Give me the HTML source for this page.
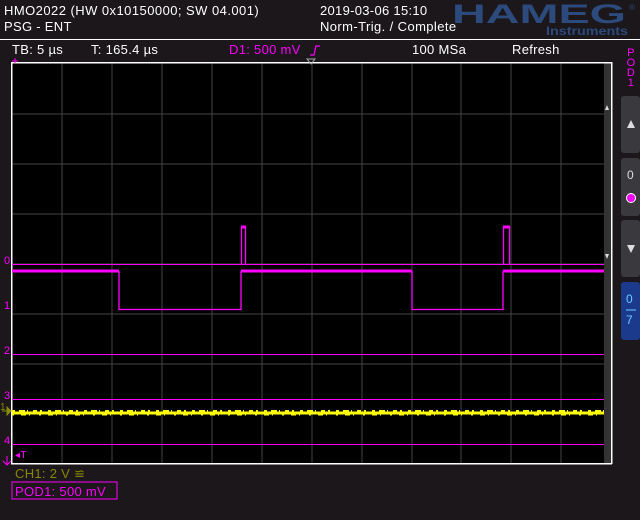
<!DOCTYPE html>
<html><head><meta charset="utf-8"><style>
html,body{margin:0;padding:0;background:#1b171a;width:640px;height:520px;overflow:hidden;font-family:"Liberation Sans",sans-serif}
.t{position:absolute;color:#fff;font-size:13px;white-space:nowrap;letter-spacing:0.3px}
</style></head><body>
<div class="t" style="left:4px;top:3px;letter-spacing:0.45px">HMO2022 (HW 0x10150000; SW 04.001)</div>
<div class="t" style="left:4px;top:19px">PSG - ENT</div>
<div class="t" style="left:320px;top:3px">2019-03-06 15:10</div>
<div class="t" style="left:320px;top:19px;letter-spacing:0.4px">Norm-Trig. / Complete</div>
<div class="t" style="left:12px;top:42px">TB: 5 µs</div>
<div class="t" style="left:91px;top:42px">T: 165.4 µs</div>
<div class="t" style="left:229px;top:42px;color:#f0f">D1: 500 mV</div>
<div class="t" style="left:412px;top:42px">100 MSa</div>
<div class="t" style="left:512px;top:42px">Refresh</div>
<div class="t" style="left:626px;top:48px;color:#f0f;font-size:11px;line-height:10px;text-align:center;width:10px">P<br>O<br>D<br>1</div>
<svg style="position:absolute;left:0;top:0" width="640" height="520">
<text x="452" y="23" font-family="Liberation Sans" font-weight="bold" font-size="27" fill="#2c4a7c" textLength="174" lengthAdjust="spacingAndGlyphs">HAMEG</text>
<text x="629" y="10" font-family="Liberation Sans" font-size="8" fill="#2c4a7c">®</text>
<text x="546" y="35" font-family="Liberation Sans" font-weight="bold" font-size="12" fill="#2c4a7c" textLength="82" lengthAdjust="spacingAndGlyphs">Instruments</text>
<rect x="0" y="39" width="640" height="1" fill="#fff"/>
<path d="M310 55L314 55L316 46L320 46" stroke="#f0f" fill="none" stroke-width="1.2"/>
<rect x="12" y="63" width="599" height="401" fill="#000"/>
<g stroke="#444" stroke-width="1">
<line x1="62" y1="63" x2="62" y2="463"/><line x1="112" y1="63" x2="112" y2="463"/><line x1="162" y1="63" x2="162" y2="463"/><line x1="212" y1="63" x2="212" y2="463"/><line x1="262" y1="63" x2="262" y2="463"/><line x1="312" y1="63" x2="312" y2="463"/><line x1="362" y1="63" x2="362" y2="463"/><line x1="412" y1="63" x2="412" y2="463"/><line x1="461" y1="63" x2="461" y2="463"/><line x1="511" y1="63" x2="511" y2="463"/><line x1="561" y1="63" x2="561" y2="463"/>
<line x1="12" y1="114" x2="604" y2="114"/><line x1="12" y1="164" x2="604" y2="164"/><line x1="12" y1="214" x2="604" y2="214"/><line x1="12" y1="264" x2="604" y2="264"/><line x1="12" y1="314" x2="604" y2="314"/><line x1="12" y1="364" x2="604" y2="364"/><line x1="12" y1="414" x2="604" y2="414"/>
</g>
<rect x="604" y="63" width="7" height="400" fill="#333"/>
<rect x="611" y="62" width="1.5" height="402" fill="#fff"/>
<rect x="11" y="62" width="1.5" height="402" fill="#fff"/>
<rect x="11" y="62" width="601" height="1.5" fill="#fff"/>
<rect x="11" y="463" width="601" height="1.5" fill="#fff"/>
<polygon points="605,110 609,110 607,105" fill="#ddd"/>
<polygon points="605,254 609,254 607,259" fill="#ddd"/>
<polygon points="307,59 315,59 311,64" fill="none" stroke="#aaa"/>
<line x1="12" y1="61" x2="18" y2="61" stroke="#f0f" stroke-width="1"/><line x1="15" y1="58" x2="15" y2="63" stroke="#f0f"/>
<g stroke="#f0f" fill="none">
<line x1="12" y1="264.5" x2="604" y2="264.5" stroke-width="1"/>
<path d="M12 271H119M241 271H412M503 271H604" stroke-width="3"/>
<path d="M119 271V309.5H241V271M412 271V309.5H503V271" stroke-width="1.3"/>
<path d="M241.5 264V227H245.5V264M503.5 264V227H509.5V264" stroke-width="1.3"/>
<path d="M241 227H246M503 227H510" stroke-width="3"/>
<line x1="12" y1="354.5" x2="604" y2="354.5"/>
<line x1="12" y1="399.5" x2="604" y2="399.5"/>
<line x1="12" y1="444.5" x2="604" y2="444.5"/>
</g>
<line x1="12" y1="413" x2="604" y2="413" stroke="#ff0" stroke-width="3"/>
<line x1="12" y1="411" x2="604" y2="411" stroke="#ff0" stroke-width="2" stroke-dasharray="3 4 6 2 1 5 4 3 2 6"/>
<line x1="12" y1="415" x2="604" y2="415" stroke="#ff0" stroke-width="1" stroke-dasharray="2 7 5 3 1 9"/>
<path d="M2 411H9M7 407L11 411L7 415Z" stroke="#880" fill="#880"/>
<path d="M7 456V465M3 461L7 465L11 461" stroke="#f0f" fill="none"/>
<rect x="12" y="482" width="105" height="17" fill="none" stroke="#f0f" stroke-width="1"/>
<g>
<rect x="621" y="96" width="19" height="57" rx="3" fill="#3a3a3e"/>
<rect x="621" y="158" width="19" height="58" rx="3" fill="#3a3a3e"/>
<rect x="621" y="220" width="19" height="57" rx="3" fill="#3a3a3e"/>
<rect x="621" y="282" width="19" height="58" rx="3" fill="#1c3a8c"/>
<polygon points="627,128 635,128 631,120" fill="#ddd"/>
<polygon points="627,245 635,245 631,253" fill="#ddd"/>
<circle cx="631" cy="198" r="4.5" fill="#f0f" stroke="#fff" stroke-width="1"/>
<line x1="626" y1="310" x2="636" y2="310" stroke="#6cf"/>
</g>
</svg>
<div class="t" style="left:4px;top:255px;color:#f0f;font-size:11px">0</div>
<div class="t" style="left:4px;top:300px;color:#f0f;font-size:11px">1</div>
<div class="t" style="left:4px;top:345px;color:#f0f;font-size:11px">2</div>
<div class="t" style="left:4px;top:390px;color:#f0f;font-size:11px">3</div>
<div class="t" style="left:0px;top:402px;color:#880;font-size:10px">1</div>
<div class="t" style="left:4px;top:435px;color:#f0f;font-size:11px">4</div>
<div class="t" style="left:15px;top:450px;color:#f0f;font-size:10px">◂T</div>
<div class="t" style="left:627px;top:168px;color:#ddd;font-size:12px">0</div>
<div class="t" style="left:626px;top:292px;color:#6cf;font-size:12px">0</div>
<div class="t" style="left:626px;top:313px;color:#6cf;font-size:12px">7</div>
<div class="t" style="left:15px;top:466px;color:#880">CH1: 2 V ≌</div>
<div class="t" style="left:15px;top:484px;color:#f0f">POD1: 500 mV</div>
</body></html>
